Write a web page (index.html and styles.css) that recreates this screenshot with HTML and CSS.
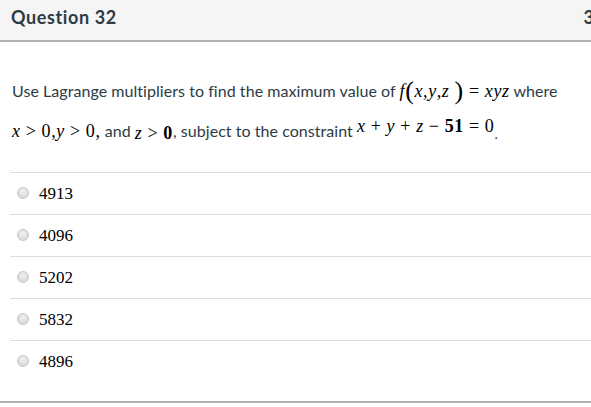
FILE: index.html
```html
<!DOCTYPE html>
<html>
<head>
<meta charset="utf-8">
<link rel="stylesheet" href="styles.css">
</head>
<body>
<div class="question">
  <div class="header">
    <span class="title">Question 32</span>
    <span class="pts">3</span>
  </div>
  <div class="text">
    <p class="line">Use Lagrange multipliers to find the maximum value of <span class="m fx"><i>f</i><span class="paren">(</span><i>x</i>,<i>y</i>,<i>z</i>&nbsp;<span class="paren">)</span> = <i>xyz</i></span> where</p>
    <p class="line"><span class="m"><i>x</i> &gt; 0,<i>y</i> &gt; 0,</span> and <span class="m low"><i>z</i> &gt; <b>0</b></span>, subject to the constraint <span class="m up"><i>x</i> + <i>y</i> + <i>z</i> − <b>51</b> = 0</span><span class="dot">.</span></p>
  </div>
  <div class="answers">
    <label class="ans"><span class="radio"></span><span class="val">4913</span></label>
    <label class="ans"><span class="radio"></span><span class="val">4096</span></label>
    <label class="ans"><span class="radio"></span><span class="val">5202</span></label>
    <label class="ans"><span class="radio"></span><span class="val">5832</span></label>
    <label class="ans"><span class="radio"></span><span class="val">4896</span></label>
  </div>
</div>
</body>
</html>
```
FILE: styles.css
```css
html, body { margin: 0; padding: 0; background: #fff; }
body { width: 591px; height: 407px; overflow: hidden; font-family: Lato, "Liberation Sans", sans-serif; color: #2d3b45; }
.question { border-bottom: 2px solid #b0b0b0; width: 591px; height: 401px; }
.header { height: 42px; background: #f5f5f5; border-bottom: 2px solid #b0b0b0; display: flex; justify-content: space-between; align-items: center; padding-left: 11px; box-sizing: border-box; overflow: hidden; }
.title { font-weight: bold; font-size: 18px; letter-spacing: 0.6px; color: #2d3b45; position: relative; top: -3px; }
.pts { font-size: 18px; font-weight: bold; margin-right: -3px; position: relative; top: -3px; }
.text { padding: 29px 12px 0 12px; height: 130px; box-sizing: border-box; font-size: 16px; letter-spacing: 0.05px; }
.text p { margin: 0; white-space: nowrap; height: 40px; line-height: 40px; }
.m { font-family: "Liberation Serif", "Times New Roman", serif; font-size: 18px; color: #000; letter-spacing: 0.6px; }
.m i { font-style: italic; }
.fx .paren { font-size: 26px; font-weight: 300; vertical-align: -2px; }
.low { position: relative; top: 2px; }
.up { position: relative; top: -5px; }
.m b { font-weight: bold; }
.dot { font-size: 14px; position: relative; top: 2px; }
.answers { padding-left: 10px; }
.ans { display: flex; align-items: center; height: 42px; border-top: 1px solid #dcdcdc; box-sizing: border-box; padding-left: 7px; }
.radio { width: 10px; height: 10px; border-radius: 50%; border: 1px solid #c6c6c6; background: radial-gradient(circle at 50% 35%, #f0f0f0, #d2d2d2); margin-right: 10px; position: relative; top: -1px; }
.val { font-family: "Liberation Serif", "Times New Roman", serif; font-size: 17px; color: #000; }
```
